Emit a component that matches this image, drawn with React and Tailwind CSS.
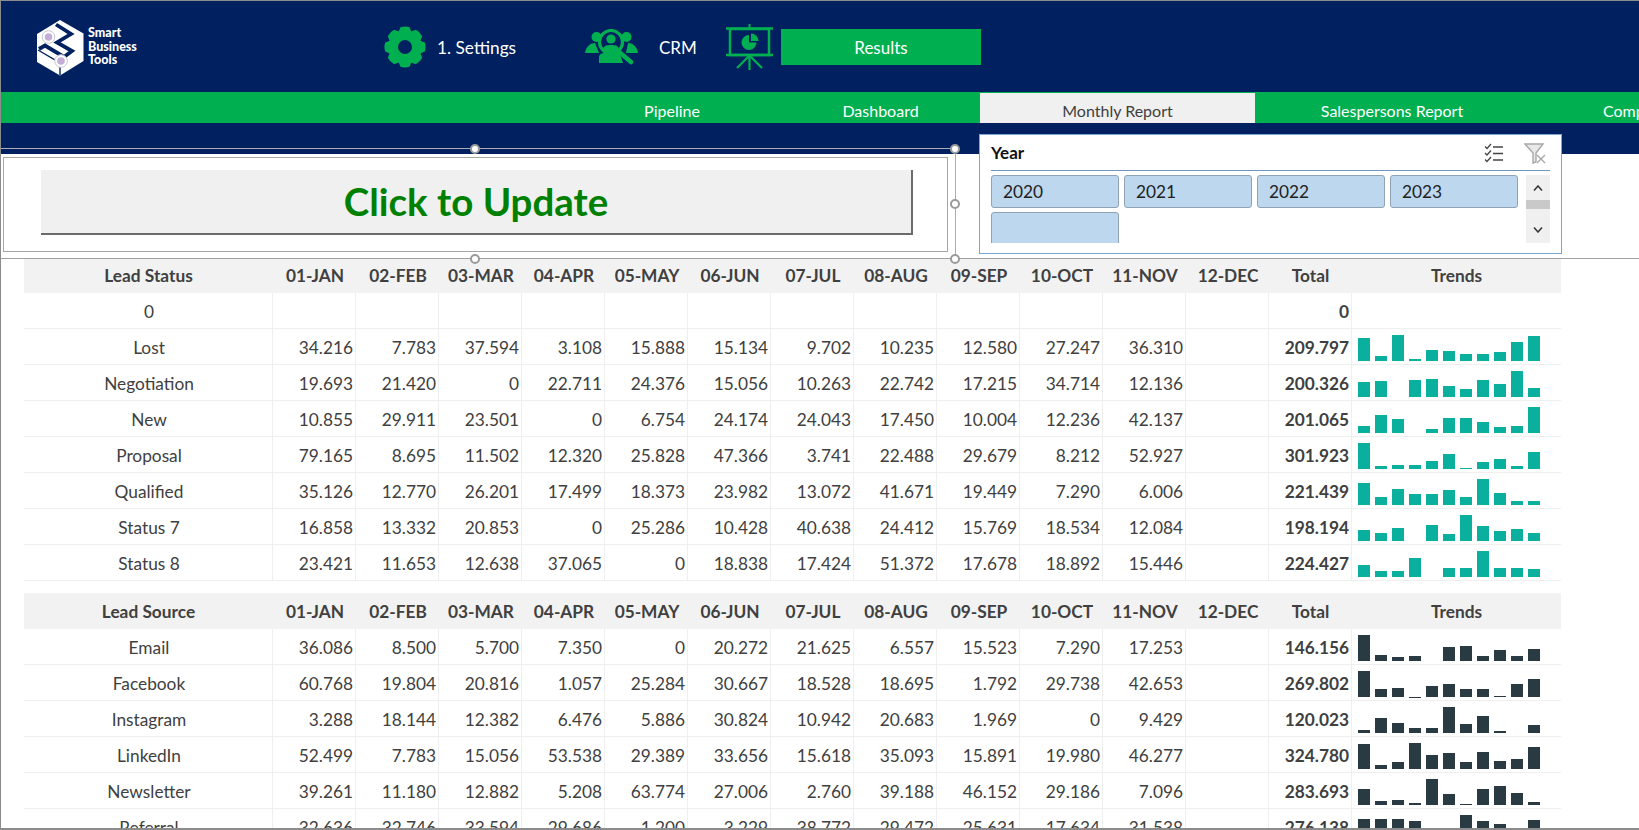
const MONTHS = ['01-JAN','02-FEB','03-MAR','04-APR','05-MAY','06-JUN','07-JUL','08-AUG','09-SEP','10-OCT','11-NOV','12-DEC'];

const STATUS = [
  ['0', [], '0'],
  ['Lost', ['34.216','7.783','37.594','3.108','15.888','15.134','9.702','10.235','12.580','27.247','36.310'], '209.797'],
  ['Negotiation', ['19.693','21.420','0','22.711','24.376','15.056','10.263','22.742','17.215','34.714','12.136'], '200.326'],
  ['New', ['10.855','29.911','23.501','0','6.754','24.174','24.043','17.450','10.004','12.236','42.137'], '201.065'],
  ['Proposal', ['79.165','8.695','11.502','12.320','25.828','47.366','3.741','22.488','29.679','8.212','52.927'], '301.923'],
  ['Qualified', ['35.126','12.770','26.201','17.499','18.373','23.982','13.072','41.671','19.449','7.290','6.006'], '221.439'],
  ['Status 7', ['16.858','13.332','20.853','0','25.286','10.428','40.638','24.412','15.769','18.534','12.084'], '198.194'],
  ['Status 8', ['23.421','11.653','12.638','37.065','0','18.838','17.424','51.372','17.678','18.892','15.446'], '224.427'],
];

const SOURCE = [
  ['Email', ['36.086','8.500','5.700','7.350','0','20.272','21.625','6.557','15.523','7.290','17.253'], '146.156'],
  ['Facebook', ['60.768','19.804','20.816','1.057','25.284','30.667','18.528','18.695','1.792','29.738','42.653'], '269.802'],
  ['Instagram', ['3.288','18.144','12.382','6.476','5.886','30.824','10.942','20.683','1.969','0','9.429'], '120.023'],
  ['LinkedIn', ['52.499','7.783','15.056','53.538','29.389','33.656','15.618','35.093','15.891','19.980','46.277'], '324.780'],
  ['Newsletter', ['39.261','11.180','12.882','5.208','63.774','27.006','2.760','39.188','46.152','29.186','7.096'], '283.693'],
  ['Referral', ['32.636','32.746','33.594','29.686','1.200','3.229','38.772','29.472','25.631','17.634','31.538'], '276.138'],
];

const num = (s) => parseInt(s.replace('.', ''), 10);

function Gear() {
  const teeth = [0, 45, 90, 135, 180, 225, 270, 315];
  return (
    <svg viewBox="0 0 42 42" className="w-[42px] h-[42px] shrink-0">
      <circle cx="21" cy="21" r="16.5" fill="#00b050" />
      {teeth.map((a) => (
        <path key={a} d="M16.5 1.2 Q21 -0.4 25.5 1.2 Q27 5 29 9 L13 9 Q15 5 16.5 1.2 Z" fill="#00b050" transform={`rotate(${a} 21 21)`} />
      ))}
      <circle cx="21" cy="21" r="7" fill="#002060" />
    </svg>
  );
}

function CrmIcon() {
  return (
    <svg viewBox="0 0 53 36" className="w-[53px] h-[36px] shrink-0">
      <circle cx="11.5" cy="8" r="5" fill="#00b050" />
      <path d="M0 24 C1 17 6 14 10 14 L14 24 Z" fill="#00b050" />
      <circle cx="41.5" cy="8" r="5" fill="#00b050" />
      <path d="M53 24 C52 17 47 14 43 14 L41 24 Z" fill="#00b050" />
      <path d="M14 34 V28 C14 25 18 23 26 23 C31 23 35 24 36 28 L38 34 Z" fill="#00b050" />
      <circle cx="26" cy="13" r="11.5" fill="#002060" stroke="#00b050" strokeWidth="3.2" />
      <circle cx="26" cy="10" r="4.6" fill="#00b050" />
      <path d="M18 20.5 C18.5 16.5 22 16 26 16 C30 16 33.5 16.5 34 20.5 C30 24 22 24 18 20.5 Z" fill="#00b050" />
      <path d="M33 22 L46 33" stroke="#00b050" strokeWidth="4.5" strokeLinecap="round" />
    </svg>
  );
}

function BoardIcon() {
  return (
    <svg viewBox="0 0 47 46" className="w-[47px] h-[46px] shrink-0">
      <path d="M23.5 0 V4" stroke="#00b050" strokeWidth="2" />
      <path d="M0 4.5 H47 M0 31 H47" stroke="#00b050" strokeWidth="2.5" />
      <rect x="4" y="5" width="39" height="26" fill="none" stroke="#00b050" strokeWidth="2.5" />
      <path d="M23.5 31 V46 M23 32 L11 44 M24 32 L36 44" stroke="#00b050" strokeWidth="2.2" />
      <path d="M23 11 A7.5 7.5 0 1 0 30.5 18.5 L23 18.5 Z" fill="#00b050" />
      <path d="M25 9.5 A7.5 7.5 0 0 1 32.5 17 L25 17 Z" fill="#00b050" />
    </svg>
  );
}

function Logo() {
  return (
    <svg viewBox="0 0 47 56" className="w-[47px] h-[56px] shrink-0 mt-[2px]">
      <path d="M23 0 L46.5 13.5 V41 L23 55.5 L0 42 V14 Z" fill="#ffffff" />
      <path d="M19 4.5 L34 14 L20 22.5 L35 31 L27 37 L8 25.5 L2 29" fill="none" stroke="#002060" strokeWidth="3.8" />
      <path d="M1 30 L23 43 L23 55" fill="none" stroke="#002060" strokeWidth="1.4" />
      <circle cx="11.5" cy="17" r="6.3" fill="#ffffff" stroke="#c9c3d6" strokeWidth="1" />
      <circle cx="11.5" cy="17" r="3.8" fill="#c3aed6" />
      <circle cx="24" cy="41" r="6.3" fill="#ffffff" stroke="#c9c3d6" strokeWidth="1" />
      <circle cx="24" cy="41" r="3.8" fill="#c3aed6" />
    </svg>
  );
}

function Handle({ className }) {
  return <div className={`absolute w-[10px] h-[10px] rounded-full bg-white border-2 border-[#9a9a9a] ${className}`} />;
}

function Slicer() {
  const btn = 'w-[128px] bg-[#bdd7ee] border border-[#8fa3b5] rounded-[3px]';
  return (
    <div className="absolute left-[978px] top-[11px] w-[583px] h-[120px] bg-white border border-[#7aa7d0] pt-[1px] px-[11px] z-10">
      <div className="h-[35px] flex items-center justify-between border-b border-[#6f97bd]">
        <span className="text-[17px] font-bold text-[#111]">Year</span>
        <div className="flex items-center gap-[20px] pr-[4px]">
          <svg viewBox="0 0 20 20" className="w-[20px] h-[20px]" fill="none" stroke="#444" strokeWidth="1.3">
            <path d="M1 3.5 L3 5.5 L7 1 M1 10 L3 12 L7 7.5 M1 16.5 L3 18.5 L7 14" />
            <path d="M9 4 H19 M9 10.5 H19 M9 17 H19" />
          </svg>
          <svg viewBox="0 0 22 21" className="w-[22px] h-[21px]" fill="none" stroke="#a8a8a8" strokeWidth="1.4">
            <path d="M1 1 H19 L12 10 V19 L9 20 V10 Z" fill="#e9e9e9" />
            <path d="M13 12 L21 20 M21 12 L13 20" />
          </svg>
        </div>
      </div>
      <div className="flex justify-between mt-[4px] h-[68px]">
        <div className="w-[527px] flex flex-wrap gap-x-[5px] gap-y-[4px] content-start overflow-hidden h-[68px]">
          {['2020', '2021', '2022', '2023'].map((y) => (
            <div key={y} className={`${btn} h-[33px] pl-[11px] flex items-center text-[17.3px] text-[#222]`}>{y}</div>
          ))}
          <div className={`${btn} h-[40px]`} />
        </div>
        <div className="w-[24px] h-[68px] bg-[#f0f0f0] flex flex-col items-center justify-between py-[10px] relative">
          <svg viewBox="0 0 10 6" className="w-[10px] h-[6px]" fill="none" stroke="#333" strokeWidth="1.5"><path d="M1 5.5 L5 1 L9 5.5" /></svg>
          <div className="absolute left-0 top-[25px] w-full h-[9px] bg-[#c9c9c9]" />
          <svg viewBox="0 0 10 6" className="w-[10px] h-[6px]" fill="none" stroke="#333" strokeWidth="1.5"><path d="M1 .5 L5 5 L9 .5" /></svg>
        </div>
      </div>
    </div>
  );
}

const GRID = 'grid grid-cols-[249px_repeat(13,83px)_209px] w-[1537px]';

function Table({ title, rows, bar, headH }) {
  return (
    <div className="ml-[23px]">
      <div className={`${GRID} bg-[#f2f2f2] font-bold text-[17.3px] text-[#404040] items-center text-center ${headH}`}>
        <div>{title}</div>
        {MONTHS.map((m) => <div key={m} className="pl-[1px]">{m}</div>)}
        <div>Total</div>
        <div>Trends</div>
      </div>
      {rows.map(([label, vals, total]) => {
        const max = Math.max(1, ...vals.map(num));
        return (
          <div key={label} className={`${GRID} h-[36px] border-b border-[#efefef] text-[17.3px] text-[#404040]`}>
            <div className="border-r border-[#efefef] flex items-center justify-center pt-[2px] pl-[2px]">{label}</div>
            {MONTHS.map((m, i) => (
              <div key={m} className="border-r border-[#efefef] flex items-center justify-end pr-[2px] pt-[2px]">{vals[i] ?? ''}</div>
            ))}
            <div className="border-r border-[#efefef] flex items-center justify-end pr-[2px] pt-[2px] font-bold">{total}</div>
            <div className="flex items-end gap-[5px] pl-[6px] pb-[3px]">
              {vals.map((v, i) => (
                <div key={i} className={`w-[12px] ${bar}`} style={{ height: `${(num(v) / max) * 25.7}px` }} />
              ))}
            </div>
          </div>
        );
      })}
    </div>
  );
}

export default function App() {
  return (
    <div className="w-[1639px] h-[830px] overflow-hidden bg-white border-t border-l border-b-2 border-[#8c8c8c] [font-family:Lato,sans-serif]">
      <header className="h-[91px] bg-[#002060] flex items-center relative">
        <div className="ml-[36px] flex items-center gap-[4px] w-[347px]">
          <Logo />
          <div className="text-[12.5px] leading-[13.5px] font-black text-white">Smart<br />Business<br />Tools</div>
        </div>
        <Gear />
        <span className="ml-[11px] pt-[2px] w-[148px] text-[17.3px] text-white shrink-0">1. Settings</span>
        <CrmIcon />
        <span className="ml-[21px] pt-[2px] w-[36px] text-[17px] text-white shrink-0">CRM</span>
        <div className="ml-[31px]"><BoardIcon /></div>
        <div className="ml-[8px] mt-[1px] w-[200px] h-[36px] bg-[#00b050] flex items-center justify-center pt-[2px] text-[17px] text-white">Results</div>
      </header>
      <nav className="h-[31px] bg-[#00b050] flex text-[16px] text-white pl-[562px] whitespace-nowrap overflow-hidden">
        <div className="w-[218px] shrink-0 flex items-center justify-center pt-[6px]">Pipeline</div>
        <div className="w-[199px] shrink-0 flex items-center justify-center pt-[7px]">Dashboard</div>
        <div className="w-[275px] shrink-0 mt-[1px] bg-[#f0f0f0] text-[#404040] flex items-center justify-center pt-[6px]">Monthly Report</div>
        <div className="w-[274px] shrink-0 flex items-center justify-center pt-[7px]">Salespersons Report</div>
        <div className="pl-[74px] shrink-0 flex items-center pt-[7px]">Company Report</div>
      </nav>
      <section className="relative h-[136px] border-b border-[#a0a0a0]">
        <div className="h-[31px] bg-[#002060]" />
        <div className="ml-[2px] mt-[3px] w-[945px] h-[95px] border border-[#a6a6a6] pl-[37px] pt-[12px]">
          <div className="w-[872px] h-[65px] bg-[#f0f0f0] border-b-2 border-r-2 border-[#6b6b6b] flex items-center justify-center text-[38.5px] font-bold text-[#008000]">
            Click to Update
          </div>
        </div>
        {/* selection frame of the floating shape */}
        <div className="absolute left-0 top-[25px] w-[955px] h-[110px] border-t border-r border-[#a9adb5]" />
        <Handle className="left-[469px] top-[21px]" />
        <Handle className="left-[949px] top-[21px]" />
        <Handle className="left-[949px] top-[76px]" />
        <Handle className="left-[469px] top-[131px]" />
        <Handle className="left-[949px] top-[131px]" />
        <Slicer />
      </section>
      <Table title="Lead Status" rows={STATUS} bar="bg-[#0aaf9d]" headH="h-[34px]" />
      <div className="h-[12px]" />
      <Table title="Lead Source" rows={SOURCE} bar="bg-[#2a3a42]" headH="h-[36px] pt-[2px]" />
    </div>
  );
}
